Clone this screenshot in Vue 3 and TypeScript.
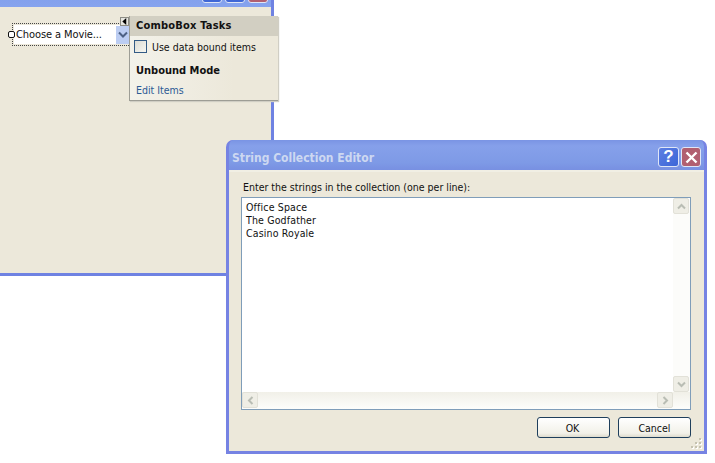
<script setup lang="ts">
const movies: string[] = ['Office Space', 'The Godfather', 'Casino Royale']
</script>

<template>
  <div class="canvas">
    <section class="designer">
      <div class="designer-title">
        <span class="cap cap-blue"></span>
        <span class="cap cap-blue"></span>
        <span class="cap cap-red"></span>
      </div>
      <div class="designer-body">
        <div class="combo">
          <span class="grip"></span>
          <span class="combo-text">Choose a Movie...</span>
          <span class="combo-btn">
            <svg width="10" height="8" viewBox="0 0 10 8"><path d="M1 1.5 5 5.5 9 1.5" fill="none" stroke="#4d6185" stroke-width="2" /></svg>
          </span>
        </div>
        <span class="smart-tag">
          <svg width="5" height="7" viewBox="0 0 5 8"><path d="M4.5 0V8L0 4Z" fill="#000" /></svg>
        </span>
        <div class="tasks">
          <div class="tasks-head">ComboBox Tasks</div>
          <label class="check-row"><span class="check"></span>Use data bound items</label>
          <div class="tasks-sub">Unbound Mode</div>
          <div class="tasks-link">Edit Items</div>
        </div>
      </div>
    </section>

    <section class="dialog">
      <header class="dialog-title">
        <span class="dialog-name">String Collection Editor</span>
        <span class="dlg-btn dlg-help">?</span>
        <span class="dlg-btn dlg-close">
          <svg width="13" height="13" viewBox="0 0 13 13"><path d="M1.5 1.5 11.5 11.5M11.5 1.5 1.5 11.5" stroke="#fff" stroke-width="2.4" /></svg>
        </span>
      </header>
      <div class="dialog-body">
        <div class="prompt">Enter the strings in the collection (one per line):</div>
        <div class="editor">
          <div class="editor-main">
            <div class="lines">
              <div v-for="movie in movies" :key="movie">{{ movie }}</div>
            </div>
            <div class="vscroll">
              <span class="sbtn"><svg width="9" height="7" viewBox="0 0 9 7"><path d="M1 5.5 4.5 2 8 5.5" fill="none" stroke="#b9bdb4" stroke-width="2" /></svg></span>
              <span class="sbtn"><svg width="9" height="7" viewBox="0 0 9 7"><path d="M1 1.5 4.5 5 8 1.5" fill="none" stroke="#b9bdb4" stroke-width="2" /></svg></span>
            </div>
          </div>
          <div class="hscroll">
            <span class="sbtn"><svg width="7" height="9" viewBox="0 0 7 9"><path d="M5.5 1 2 4.5 5.5 8" fill="none" stroke="#b9bdb4" stroke-width="2" /></svg></span>
            <span class="sbtn"><svg width="7" height="9" viewBox="0 0 7 9"><path d="M1.5 1 5 4.5 1.5 8" fill="none" stroke="#b9bdb4" stroke-width="2" /></svg></span>
          </div>
        </div>
        <div class="actions">
          <button class="btn btn-ok">OK</button>
          <button class="btn">Cancel</button>
        </div>
        <svg class="resize" width="12" height="12" viewBox="0 0 12 12">
          <g fill="#fff"><rect x="9" y="1" width="2" height="2" /><rect x="5" y="5" width="2" height="2" /><rect x="9" y="5" width="2" height="2" /><rect x="1" y="9" width="2" height="2" /><rect x="5" y="9" width="2" height="2" /><rect x="9" y="9" width="2" height="2" /></g>
          <g fill="#c5c2b0"><rect x="8" y="0" width="2" height="2" /><rect x="4" y="4" width="2" height="2" /><rect x="8" y="4" width="2" height="2" /><rect x="0" y="8" width="2" height="2" /><rect x="4" y="8" width="2" height="2" /><rect x="8" y="8" width="2" height="2" /></g>
        </svg>
      </div>
    </section>
  </div>
</template>

<style>
html, body { margin: 0; background: #fff; }
</style>

<style scoped>
.canvas {
  position: relative;
  width: 715px;
  height: 463px;
  overflow: hidden;
  background: #fff;
  font-family: "DejaVu Sans", "Noto Sans", sans-serif;
  font-stretch: condensed;
  font-size: 10.5px;
  color: #111;
}
.designer {
  position: absolute;
  left: -4px;
  top: -20px;
  width: 278px;
  height: 296px;
  box-sizing: border-box;
  display: flex;
  flex-direction: column;
  background: #6c86e0;
  border: solid #6f82e2;
  border-width: 0 3px 3px;
}
.designer-title {
  height: 27px;
  display: flex;
  justify-content: flex-end;
  gap: 3px;
  padding-right: 3px;
  box-sizing: border-box;
  background: linear-gradient(#7b9bea, #86a3ee);
}
.cap {
  width: 20px;
  height: 23px;
  border-radius: 3px;
  border: 1px solid #dfe6f7;
  box-sizing: border-box;
}
.cap-blue { background: #3f67d6; }
.cap-red { background: #b15f70; }
.designer-body {
  position: relative;
  flex: 1;
  background: #ece8da;
}
.combo {
  position: absolute;
  left: 15px;
  top: 18px;
  width: 115px;
  height: 19px;
  display: flex;
  align-items: center;
  background: #fff;
  outline: 1px dotted #444;
  outline-offset: 1px;
  font-size: 11px;
  letter-spacing: -0.1px;
}
.grip {
  position: absolute;
  left: -6px;
  top: 6px;
  width: 5px;
  height: 5px;
  background: #fff;
  border: 1px solid #111;
  border-radius: 2px;
}
.combo-text { padding-left: 2px; flex: 1; }
.combo-btn {
  width: 13px;
  height: 18px;
  display: flex;
  align-items: center;
  justify-content: center;
  background: #bccdf2;
}
.smart-tag {
  position: absolute;
  left: 121px;
  top: 10px;
  width: 9px;
  height: 9px;
  display: flex;
  align-items: center;
  justify-content: center;
  background: #e6e6e0;
  border: 1px solid #8d8d85;
  box-sizing: border-box;
}
.tasks {
  position: absolute;
  left: 130px;
  top: 9px;
  width: 149px;
  height: 85px;
  box-sizing: border-box;
  background: linear-gradient(90deg, #f3f2ea, #ece8da 70%);
  border-left: 1px solid #9d9d95;
  border-bottom: 1px solid #9d9d95;
  box-shadow: 1px 1px 1px #d0cec4;
}
.tasks-head {
  height: 20px;
  line-height: 20px;
  padding-left: 6px;
  background: #d2cfc2;
  font-weight: 700;
  font-size: 11px;
  letter-spacing: 0.2px;
}
.check-row {
  display: flex;
  align-items: center;
  gap: 5px;
  height: 15px;
  margin-top: 3px;
  padding-left: 4px;
}
.check {
  width: 13px;
  height: 13px;
  box-sizing: border-box;
  border: 1px solid #335b85;
  background: linear-gradient(135deg, #dcdcd4, #f7f7f1);
}
.tasks-sub {
  margin-top: 10px;
  padding-left: 6px;
  font-weight: 700;
  font-size: 11px;
}
.tasks-link {
  margin-top: 7px;
  padding-left: 6px;
  color: #2b5a94;
}
.dialog {
  position: absolute;
  left: 226px;
  top: 140px;
  width: 481px;
  height: 314px;
  box-sizing: border-box;
  display: flex;
  flex-direction: column;
  background: #7280e2;
  border: solid #7683e3;
  border-width: 0 3px 3px;
  border-radius: 7px 7px 0 0;
  overflow: hidden;
}
.dialog-title {
  height: 30px;
  flex: none;
  box-sizing: border-box;
  display: flex;
  align-items: center;
  gap: 2px;
  padding: 4px 3px 0 3px;
  background: linear-gradient(#7a94e4, #86a0ea 20%, #7e9ae6 75%, #7890e2);
}
.dialog-name {
  flex: 1;
  padding-top: 2px;
  font-weight: 700;
  font-size: 12px;
  color: #cdd8f1;
}
.dlg-btn {
  width: 20px;
  height: 20px;
  box-sizing: border-box;
  border: 1px solid #dfe6f7;
  border-radius: 3px;
  display: flex;
  align-items: center;
  justify-content: center;
}
.dlg-help {
  width: 21px;
  background: linear-gradient(135deg, #5d7fe2, #3c66d8);
  color: #fff;
  font: 700 17px "Liberation Sans", sans-serif;
}
.dlg-close { background: #b15f70; }
.dialog-body {
  position: relative;
  flex: 1;
  display: flex;
  flex-direction: column;
  box-sizing: border-box;
  padding: 8px 13px 13px 12px;
  background: #ece8da;
  border-top: 2px solid #f1efe4;
}
.prompt { height: 17px; line-height: 14px; padding-left: 2px; }
.editor {
  flex: 1;
  min-height: 0;
  display: flex;
  flex-direction: column;
  border: 1px solid #7f9db9;
  background: #fff;
}
.editor-main { flex: 1; min-height: 0; display: flex; }
.lines {
  flex: 1;
  padding: 3px 4px;
  line-height: 13px;
  letter-spacing: 0.15px;
}
.vscroll {
  width: 17px;
  display: flex;
  flex-direction: column;
  justify-content: space-between;
  background: #fcfcfa;
}
.hscroll {
  height: 17px;
  flex: none;
  display: flex;
  justify-content: space-between;
  padding-right: 17px;
  background: linear-gradient(#f1f0e8, #fdfdfb);
}
.sbtn {
  width: 16px;
  height: 16px;
  display: flex;
  align-items: center;
  justify-content: center;
  box-sizing: border-box;
  background: #efeee6;
  border: 1px solid #e2e1d8;
  border-radius: 2px;
}
.actions {
  display: flex;
  justify-content: flex-end;
  gap: 8px;
  padding-top: 7px;
  flex: none;
}
.btn {
  width: 73px;
  height: 21px;
  padding: 0;
  box-sizing: border-box;
  border: 1px solid #1f3f5c;
  border-radius: 3px;
  background: linear-gradient(#fff, #f2f1e9 80%, #dedbcd);
  font: inherit;
  color: #111;
}
.btn-ok { padding-right: 2px; }
.resize {
  position: absolute;
  right: 1px;
  bottom: 1px;
}
</style>
